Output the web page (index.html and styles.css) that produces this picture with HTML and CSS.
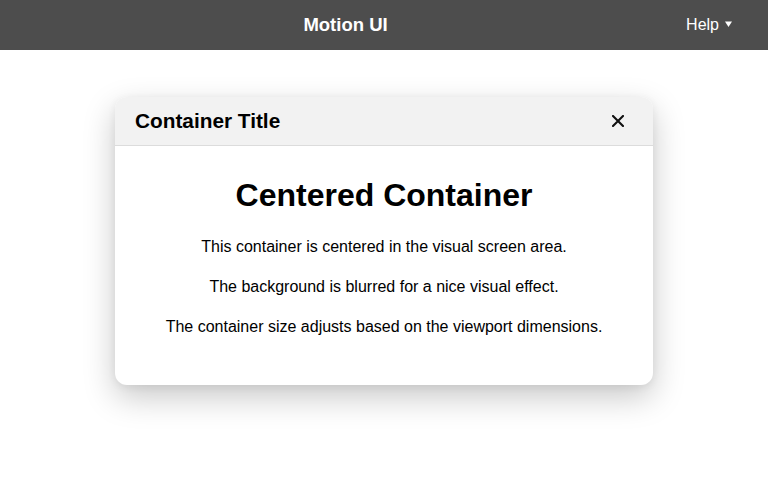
FILE: index.html
```html
<!DOCTYPE html>
<html lang="en">
<head>
<meta charset="utf-8">
<title>Motion UI</title>
<link rel="stylesheet" href="styles.css">
</head>
<body>
<header class="topbar">
  <div class="brand">Motion UI</div>
  <div class="help">Help <svg class="caret" width="7" height="6" viewBox="0 0 7 6"><path d="M0 0.5 L7 0.5 L3.5 6 Z" fill="#fff"/></svg></div>
</header>
<main class="stage">
  <section class="card">
    <div class="card-head">
      <h2 class="card-title">Container Title</h2>
      <button class="close" aria-label="Close"><svg width="12" height="12" viewBox="0 0 12 12"><path d="M1 1 L11 11 M11 1 L1 11" stroke="#111" stroke-width="2.1" stroke-linecap="square"/></svg></button>
    </div>
    <div class="card-body">
      <h1 class="heading">Centered Container</h1>
      <p>This container is centered in the visual screen area.</p>
      <p>The background is blurred for a nice visual effect.</p>
      <p>The container size adjusts based on the viewport dimensions.</p>
    </div>
  </section>
</main>
</body>
</html>
```
FILE: styles.css
```css
html, body {
  margin: 0;
  padding: 0;
  background: #fff;
  font-family: "Liberation Sans", Arial, sans-serif;
  color: #000;
}
.topbar {
  height: 50px;
  background: #4d4d4d;
  display: flex;
  align-items: center;
  padding: 0 36px 0 0;
  color: #fff;
}
.brand {
  flex: 1;
  text-align: center;
  font-weight: bold;
  font-size: 18.5px;
  padding-left: 4px;
}
.help {
  font-size: 16px;
  display: flex;
  align-items: center;
  gap: 6px;
  margin-left: -1px;
}
.caret {
  display: block;
  margin-top: -2px;
}
.stage {
  display: flex;
  justify-content: center;
  padding: 47px 0 60px;
}
.card {
  width: 538px;
  background: #fff;
  border-radius: 12px;
  box-shadow: 0 12px 32px rgba(0,0,0,0.22), 0 2px 8px rgba(0,0,0,0.06);
  overflow: hidden;
}
.card-head {
  height: 49px;
  box-sizing: border-box;
  background: #f2f2f2;
  border-bottom: 1px solid #dcdcdc;
  display: flex;
  align-items: center;
  justify-content: space-between;
  padding: 0 29px 0 20px;
}
.card-title {
  margin: 0;
  font-size: 20.8px;
  font-weight: bold;
}
.close {
  background: none;
  border: 0;
  padding: 0;
  display: flex;
  cursor: pointer;
}
.card-body {
  padding: 31px 20px 30px;
  text-align: center;
}
.heading {
  margin: 0 0 21px;
  font-size: 32px;
  font-weight: bold;
}
.card-body p {
  margin: 16px 0;
  font-size: 16px;
  line-height: 24px;
}
```
